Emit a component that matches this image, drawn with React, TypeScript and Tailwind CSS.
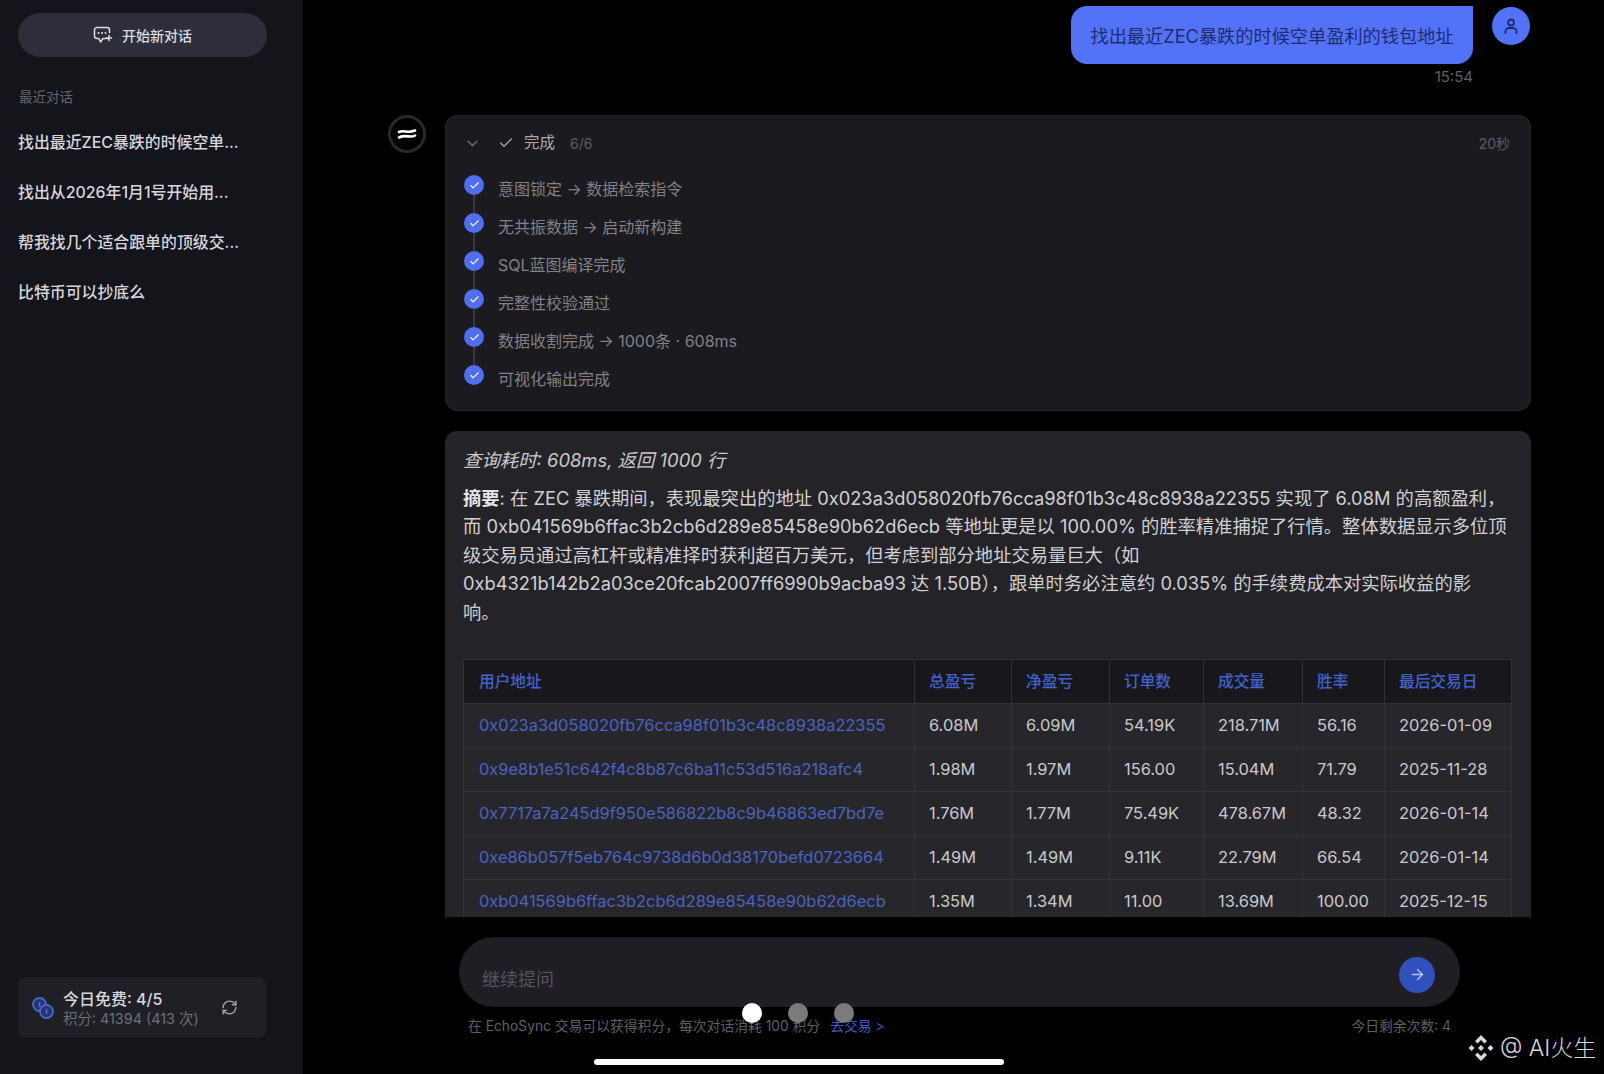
import React from 'react';
import { Check, ChevronDown, RefreshCw, ArrowRight } from 'lucide-react';

const history = [
  '找出最近ZEC暴跌的时候空单...',
  '找出从2026年1月1号开始用...',
  '帮我找几个适合跟单的顶级交...',
  '比特币可以抄底么',
];

const steps = [
  '意图锁定 → 数据检索指令',
  '无共振数据 → 启动新构建',
  'SQL蓝图编译完成',
  '完整性校验通过',
  '数据收割完成 → 1000条\u00a0· 608ms',
  '可视化输出完成',
];

const headers = ['用户地址', '总盈亏', '净盈亏', '订单数', '成交量', '胜率', '最后交易日'];

const rows = [
  ['0x023a3d058020fb76cca98f01b3c48c8938a22355', '6.08M', '6.09M', '54.19K', '218.71M', '56.16', '2026-01-09'],
  ['0x9e8b1e51c642f4c8b87c6ba11c53d516a218afc4', '1.98M', '1.97M', '156.00', '15.04M', '71.79', '2025-11-28'],
  ['0x7717a7a245d9f950e586822b8c9b46863ed7bd7e', '1.76M', '1.77M', '75.49K', '478.67M', '48.32', '2026-01-14'],
  ['0xe86b057f5eb764c9738d6b0d38170befd0723664', '1.49M', '1.49M', '9.11K', '22.79M', '66.54', '2026-01-14'],
  ['0xb041569b6ffac3b2cb6d289e85458e90b62d6ecb', '1.35M', '1.34M', '11.00', '13.69M', '100.00', '2025-12-15'],
];

const Sidebar: React.FC = () => (
  <aside className="w-[303px] h-full shrink-0 bg-[#14141b] flex flex-col px-[18px] pt-[13px] pb-[36px]">
    <div className="h-[44px] w-[249px] rounded-full bg-[#2d2e39] flex items-center justify-center gap-[9px] text-[14px] font-medium text-[#dcdce0]">
      <svg width="20" height="18" viewBox="0 0 20 18" fill="none" stroke="#dcdce0" strokeWidth="1.5" strokeLinejoin="round" strokeLinecap="round">
        <path d="M15 12.5 H10 L7.5 16 L6 12.5 H4 A2.5 2.5 0 0 1 1.5 10 V4 A2.5 2.5 0 0 1 4 1.5 H14 A2.5 2.5 0 0 1 16.5 4 V6.5" />
        <path d="M5.5 7h.01M9 7h.01M12.5 7h.01" strokeWidth="2" />
        <path d="M16 9.5v5M13.5 12h5" />
      </svg>
      <span>开始新对话</span>
    </div>
    <div className="mt-[31px] pl-[1px] text-[13.5px] leading-[18px] text-[#66666d]">最近对话</div>
    <div className="mt-[12px] flex flex-col">
      {history.map((item) => (
        <div key={item} className="h-[50px] flex items-center text-[15.9px] font-medium text-[#d6d6da] whitespace-nowrap">
          {item}
        </div>
      ))}
    </div>
    <div className="mt-auto h-[61px] w-[248px] rounded-lg bg-[#1f1f26] flex items-center pl-[13px] pr-[28px]">
      <svg width="24" height="24" viewBox="0 0 24 24" fill="#26346f" stroke="#4a66cf" strokeWidth="1.8" className="shrink-0">
        <circle cx="8.5" cy="8.5" r="6.5" />
        <circle cx="15.5" cy="15.5" r="6.5" />
        <path d="M8.5 6v5M15.5 13v5" />
      </svg>
      <div className="ml-[8px] flex-1">
        <div className="text-[16px] leading-[22px] font-medium text-[#d8d8dc]">今日免费: 4/5</div>
        <div className="text-[14.4px] leading-[18px] text-[#6e6e75] whitespace-nowrap">积分: 41394 (413 次)</div>
      </div>
      <RefreshCw size={17} className="text-[#a4a4a8]" />
    </div>
  </aside>
);

const StatusCard: React.FC = () => (
  <div className="flex-1 h-[296px] rounded-xl bg-[#1b1b1f] border border-[#242428] pl-[18px] pr-[20px] pt-[16px]">
    <div className="flex items-center h-[22px]">
      <ChevronDown size={17} className="text-[#66666c]" />
      <Check size={16} className="ml-[17px] text-[#a8a8ac]" />
      <span className="ml-[10px] text-[15.5px] text-[#a8a8ac]">完成</span>
      <span className="ml-[15px] text-[14px] text-[#5c5c62]">6/6</span>
      <span className="ml-auto text-[14px] text-[#5c5c62]">20秒</span>
    </div>
    <div className="mt-[21px] flex flex-col">
      {steps.map((step, i) => (
        <div key={step} className="h-[38px] flex">
          <div className="w-[20px] flex flex-col items-center">
            <div className="h-[20px] w-[20px] shrink-0 rounded-full bg-[#4f6ef0] flex items-center justify-center">
              <Check size={11} strokeWidth={2.5} className="text-white" />
            </div>
            {i < steps.length - 1 && <div className="w-[2px] flex-1 bg-[#38383d]" />}
          </div>
          <div className="ml-[14px] mt-[3px] text-[16px] leading-[22px] text-[#818187]">{step}</div>
        </div>
      ))}
    </div>
  </div>
);

const ResultTable: React.FC = () => (
  <table className="mt-[33px] w-[1048px] table-fixed border-collapse text-[16.4px]">
    <colgroup>
      <col className="w-[451px]" />
      <col className="w-[97px]" />
      <col className="w-[98px]" />
      <col className="w-[94px]" />
      <col className="w-[99px]" />
      <col className="w-[82px]" />
      <col className="w-[127px]" />
    </colgroup>
    <thead>
      <tr className="h-[44px] bg-[#18181c]">
        {headers.map((h) => (
          <th key={h} className="border border-[#323236] px-[14px] first:px-[15px] text-left text-[15.7px] font-medium text-[#4362d0]">
            {h}
          </th>
        ))}
      </tr>
    </thead>
    <tbody>
      {rows.map((row) => (
        <tr key={row[0]} className="h-[44px] bg-[#27272b]">
          {row.map((cell, i) => (
            <td
              key={i}
              className={
                i === 0
                  ? 'border border-[#323236] px-[15px] whitespace-nowrap text-[#4a63c4]'
                  : 'border border-[#323236] px-[14px] whitespace-nowrap text-[#c9c9cd]'
              }
            >
              {cell}
            </td>
          ))}
        </tr>
      ))}
    </tbody>
  </table>
);

const App: React.FC = () => {
  return (
    <div className="relative w-[1604px] h-[1074px] overflow-hidden bg-black flex font-[Inter,'Noto_Sans_CJK_SC',sans-serif]">
      <Sidebar />
      <main className="flex-1 h-full flex flex-col">
        <div className="flex justify-end gap-[19px] pt-[6px] pr-[77px]">
          <div className="flex flex-col items-end">
            <div className="h-[58px] w-[402px] pt-[3px] rounded-2xl rounded-tr-none bg-[#5273f7] flex items-center justify-center text-[18.2px] text-[#1f2c70]">
              找出最近ZEC暴跌的时候空单盈利的钱包地址
            </div>
            <div className="mt-[3px] text-[15px] leading-[20px] text-[#5f5f65]">15:54</div>
          </div>
          <div className="mt-[1px] h-[38px] w-[38px] rounded-full bg-[#5273f7] flex items-center justify-center">
            <svg width="20" height="20" viewBox="0 0 20 20" fill="none" stroke="#1d2a6b" strokeWidth="1.8" strokeLinecap="round">
              <circle cx="10" cy="6.5" r="3" />
              <path d="M4.5 17v-1.5A3.5 3.5 0 0 1 8 12h4a3.5 3.5 0 0 1 3.5 3.5V17" />
            </svg>
          </div>
        </div>

        <div className="mt-[28px] ml-[85px] mr-[76px] flex gap-[19px]">
          <div className="h-[38px] w-[38px] shrink-0 rounded-full border-[3px] border-[#29292d] bg-black flex items-center justify-center">
            <svg width="20" height="10" viewBox="0 0 20 10" fill="none" stroke="white" strokeWidth="2.6" strokeLinecap="round">
              <path d="M2 3 C7 0.5 11 5 18 1.5" />
              <path d="M2 8.5 C9 5 13 9.5 18 6.5" />
            </svg>
          </div>
          <StatusCard />
        </div>

        <div className="mt-[20px] ml-[142px] mr-[76px] h-[486px] shrink-0 overflow-hidden rounded-t-xl bg-[#242428] px-[18px] pt-[15px]">
          <div className="text-[18.4px] leading-[28px] italic text-[#c9c9cd]">查询耗时: 608ms, 返回 1000 行</div>
          <p className="mt-[10px] w-[1050px] text-[18.3px] leading-[28.4px] text-[#d0d0d4]">
            <strong className="font-bold text-[#e4e4e8]">摘要</strong>: 在 ZEC 暴跌期间，表现最突出的地址 0x023a3d058020fb76cca98f01b3c48c8938a22355 实现了 6.08M 的高额盈利，而 0xb041569b6ffac3b2cb6d289e85458e90b62d6ecb 等地址更是以 100.00% 的胜率精准捕捉了行情。整体数据显示多位顶级交易员通过高杠杆或精准择时获利超百万美元，但考虑到部分地址交易量巨大（如 0xb4321b142b2a03ce20fcab2007ff6990b9acba93 达 1.50B），跟单时务必注意约 0.035% 的手续费成本对实际收益的影
            <br />
            响。
          </p>
          <ResultTable />
        </div>

        <div className="mt-[20px] ml-[156px] mr-[147px] h-[70px] shrink-0 rounded-[35px] bg-[#1e1e24] flex items-center pl-[23px] pr-[25px]">
          <span className="mt-[14px] text-[18px] text-[#55555c]">继续提问</span>
          <div className="ml-auto mt-[5px] h-[36px] w-[36px] rounded-full bg-[#3050bc] flex items-center justify-center">
            <ArrowRight size={17} className="text-[#b9c4ea]" />
          </div>
        </div>

        <div className="mt-[10px] ml-[165px] mr-[156px] flex text-[13.8px] leading-[18px] text-[#5f5f66]">
          <span>在 EchoSync 交易可以获得积分，每次对话消耗 100 积分</span>
          <span className="ml-[10px] text-[#3f5cc4]">去交易 &gt;</span>
          <span className="ml-auto">今日剩余次数: 4</span>
        </div>
      </main>

      <div className="absolute left-[742px] top-[1003px] flex gap-[26px]">
        <div className="h-[20px] w-[20px] rounded-full bg-white" />
        <div className="h-[20px] w-[20px] rounded-full bg-[#7b7b7b]" />
        <div className="h-[20px] w-[20px] rounded-full bg-[#7b7b7b]" />
      </div>

      <div className="absolute left-[594px] top-[1059px] h-[6px] w-[410px] rounded-full bg-white" />

      <div className="absolute left-[1467px] top-[1033px] flex items-center gap-[5px] text-[23px] leading-[30px] font-light text-[#d8d8d8]">
        <svg width="28" height="28" viewBox="0 0 28 28" fill="#d8d8d8">
          <path d="M14 1 L20 7 L17.5 9.5 L14 6 L10.5 9.5 L8 7 Z" />
          <path d="M14 27 L20 21 L17.5 18.5 L14 22 L10.5 18.5 L8 21 Z" />
          <path d="M14 11 L17 14 L14 17 L11 14 Z" />
          <path d="M4.5 11 L7.5 14 L4.5 17 L1.5 14 Z" />
          <path d="M23.5 11 L26.5 14 L23.5 17 L20.5 14 Z" />
        </svg>
        <span>@ AI火生</span>
      </div>
    </div>
  );
};

export default App;
